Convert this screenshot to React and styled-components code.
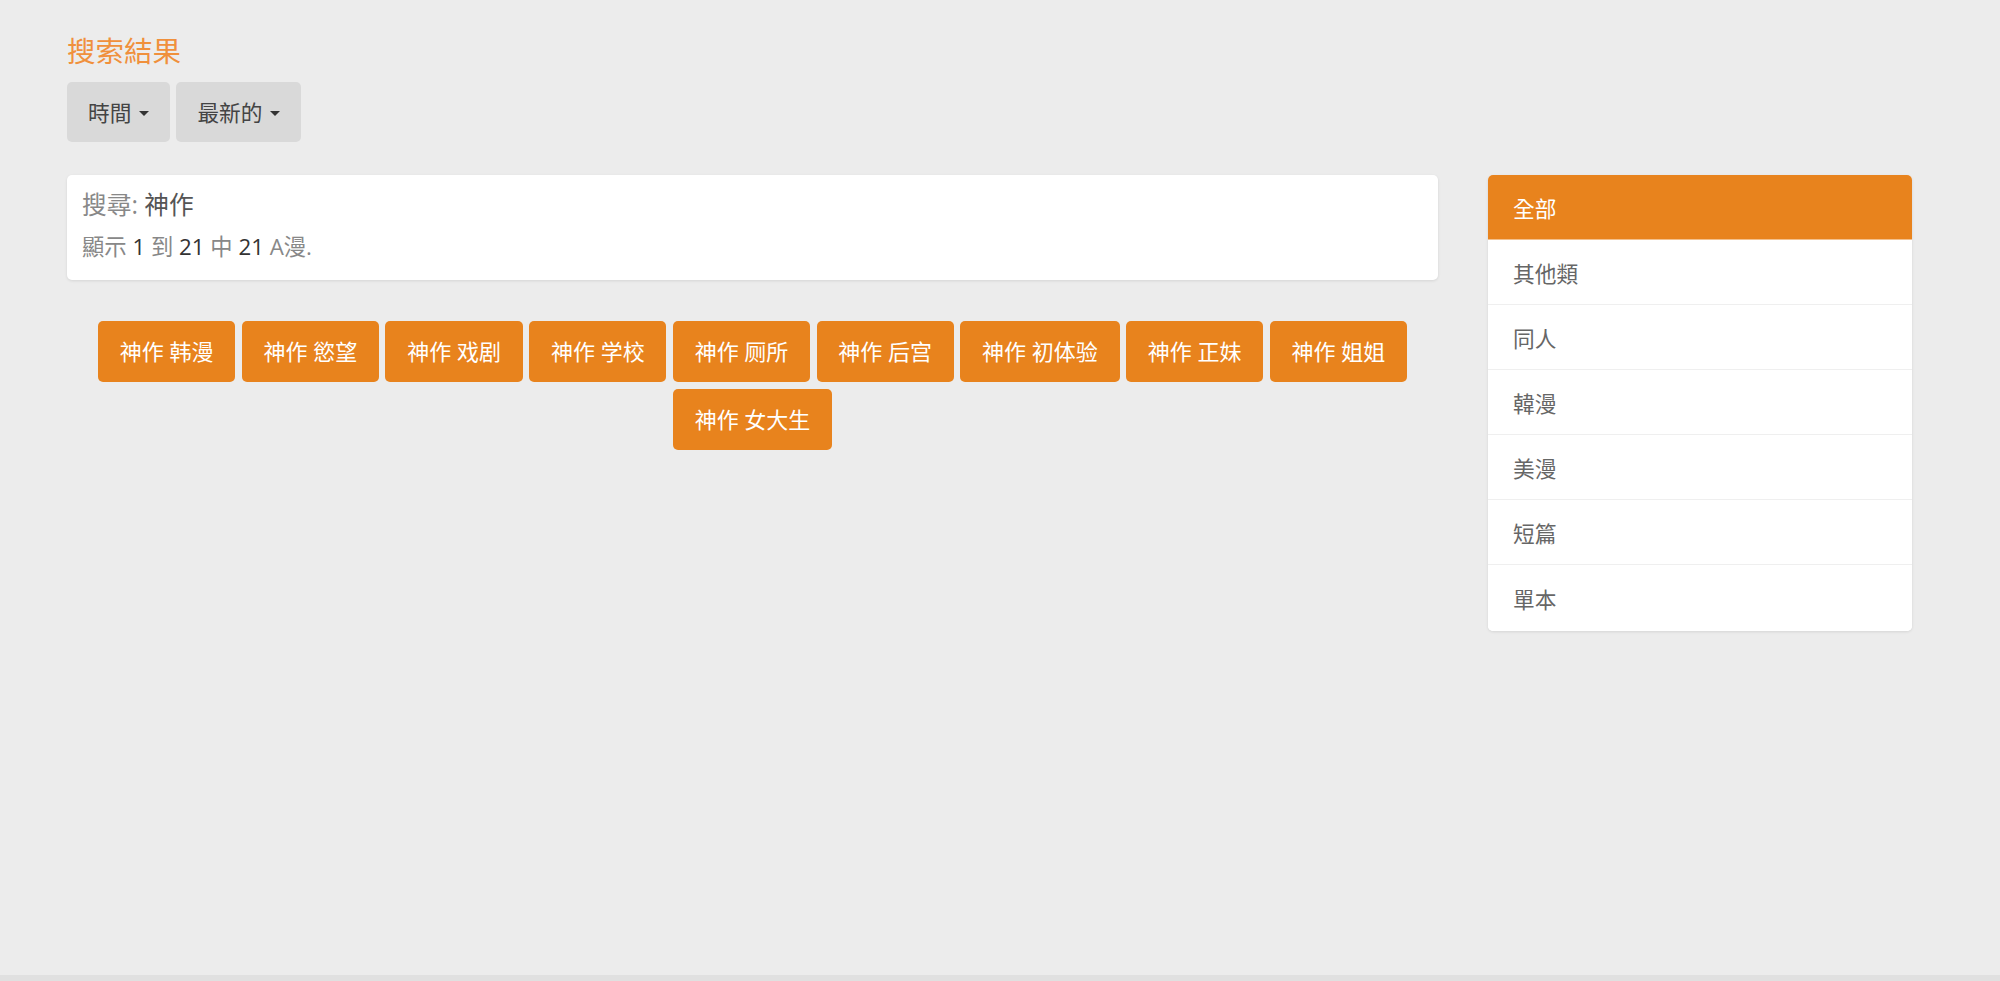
import React from "react";
import styled, { createGlobalStyle } from "styled-components";

const Global = createGlobalStyle`
  html, body { margin: 0; padding: 0; background: #ececec; }
  body {
    font-family: "Open Sans", "Noto Sans CJK TC", sans-serif;
    color: #555;
  }
  * { box-sizing: border-box; }
`;

const Page = styled.div`
  min-height: 975px;
  padding: 36px 0 0 67px;
`;

const Footer = styled.div`
  height: 40px;
  background: #e0e0e0;
`;

const Title = styled.h3`
  margin: 0 0 15px;
  font-size: 28.5px;
  font-weight: 400;
  line-height: 31px;
  color: #f0903c;
`;

const Filters = styled.div`
  display: flex;
  gap: 6px;
`;

const FilterButton = styled.button`
  display: flex;
  align-items: center;
  gap: 8px;
  height: 60px;
  padding: 0 21px;
  border: none;
  border-radius: 5px;
  background: #d9d9d9;
  color: #444;
  font-family: inherit;
  font-size: 21.7px;
  line-height: 31px;
  cursor: pointer;
`;

const Caret = styled.span`
  width: 0;
  height: 0;
  border-top: 5px solid #333;
  border-left: 5.5px solid transparent;
  border-right: 5.5px solid transparent;
  margin-top: 2px;
`;

const Layout = styled.div`
  display: flex;
  align-items: flex-start;
  gap: 50px;
  margin-top: 33px;
`;

const Main = styled.div`
  width: 1371px;
`;

const InfoCard = styled.div`
  background: #fff;
  border-radius: 5px;
  box-shadow: 0 1px 3px rgba(0, 0, 0, 0.1);
  padding: 13px 15px 0;
  height: 105px;
`;

const Query = styled.div`
  font-size: 24.7px;
  line-height: 34px;
  color: #888;
`;

const Summary = styled.div`
  margin-top: 10px;
  font-size: 22.3px;
  line-height: 30px;
  color: #888;
`;

const Strong = styled.span`
  color: ${(p) => (p.$soft ? "#555" : "#333")};
`;

const Tags = styled.div`
  display: flex;
  flex-wrap: wrap;
  justify-content: center;
  column-gap: 6.4px;
  row-gap: 7px;
  margin-top: 41px;
`;

const Tag = styled.a`
  display: flex;
  align-items: center;
  height: 61px;
  padding: 0 21.8px;
  border-radius: 5px;
  background: #e8831d;
  color: #fff;
  font-size: 22px;
  line-height: 31px;
  text-decoration: none;
  white-space: nowrap;
`;

const Sidebar = styled.div`
  width: 424px;
  background: #fff;
  border-radius: 5px;
  box-shadow: 0 1px 3px rgba(0, 0, 0, 0.1);
  overflow: hidden;
`;

const SideItem = styled.a`
  display: flex;
  align-items: center;
  height: ${(p) => (p.$last ? 66 : 65)}px;
  padding: 0 25px;
  font-size: 21.7px;
  text-decoration: none;
  color: ${(p) => (p.$active ? "#fff" : "#666")};
  background: ${(p) => (p.$active ? "#e8831d" : "#fff")};
  border-bottom: ${(p) =>
    p.$last ? "none" : p.$active ? "1px solid #f3c08c" : "1px solid #efefef"};
`;

const tags = ["韩漫", "慾望", "戏剧", "学校", "厕所", "后宫", "初体验", "正妹", "姐姐", "女大生"];
const cats = ["全部", "其他類", "同人", "韓漫", "美漫", "短篇", "單本"];

export default function App() {
  return (
    <>
      <Global />
      <Page>
        <Title>搜索結果</Title>
        <Filters>
          <FilterButton>
            時間<Caret />
          </FilterButton>
          <FilterButton>
            最新的<Caret />
          </FilterButton>
        </Filters>
        <Layout>
          <Main>
            <InfoCard>
              <Query>
                搜尋: <Strong $soft>神作</Strong>
              </Query>
              <Summary>
                顯示 <Strong>1</Strong> 到 <Strong>21</Strong> 中 <Strong>21</Strong> A漫.
              </Summary>
            </InfoCard>
            <Tags>
              {tags.map((t) => (
                <Tag key={t} href="#">
                  神作 {t}
                </Tag>
              ))}
            </Tags>
          </Main>
          <Sidebar>
            {cats.map((c, i) => (
              <SideItem
                key={c}
                href="#"
                $active={i === 0}
                $last={i === cats.length - 1}
              >
                {c}
              </SideItem>
            ))}
          </Sidebar>
        </Layout>
      </Page>
      <Footer />
    </>
  );
}
